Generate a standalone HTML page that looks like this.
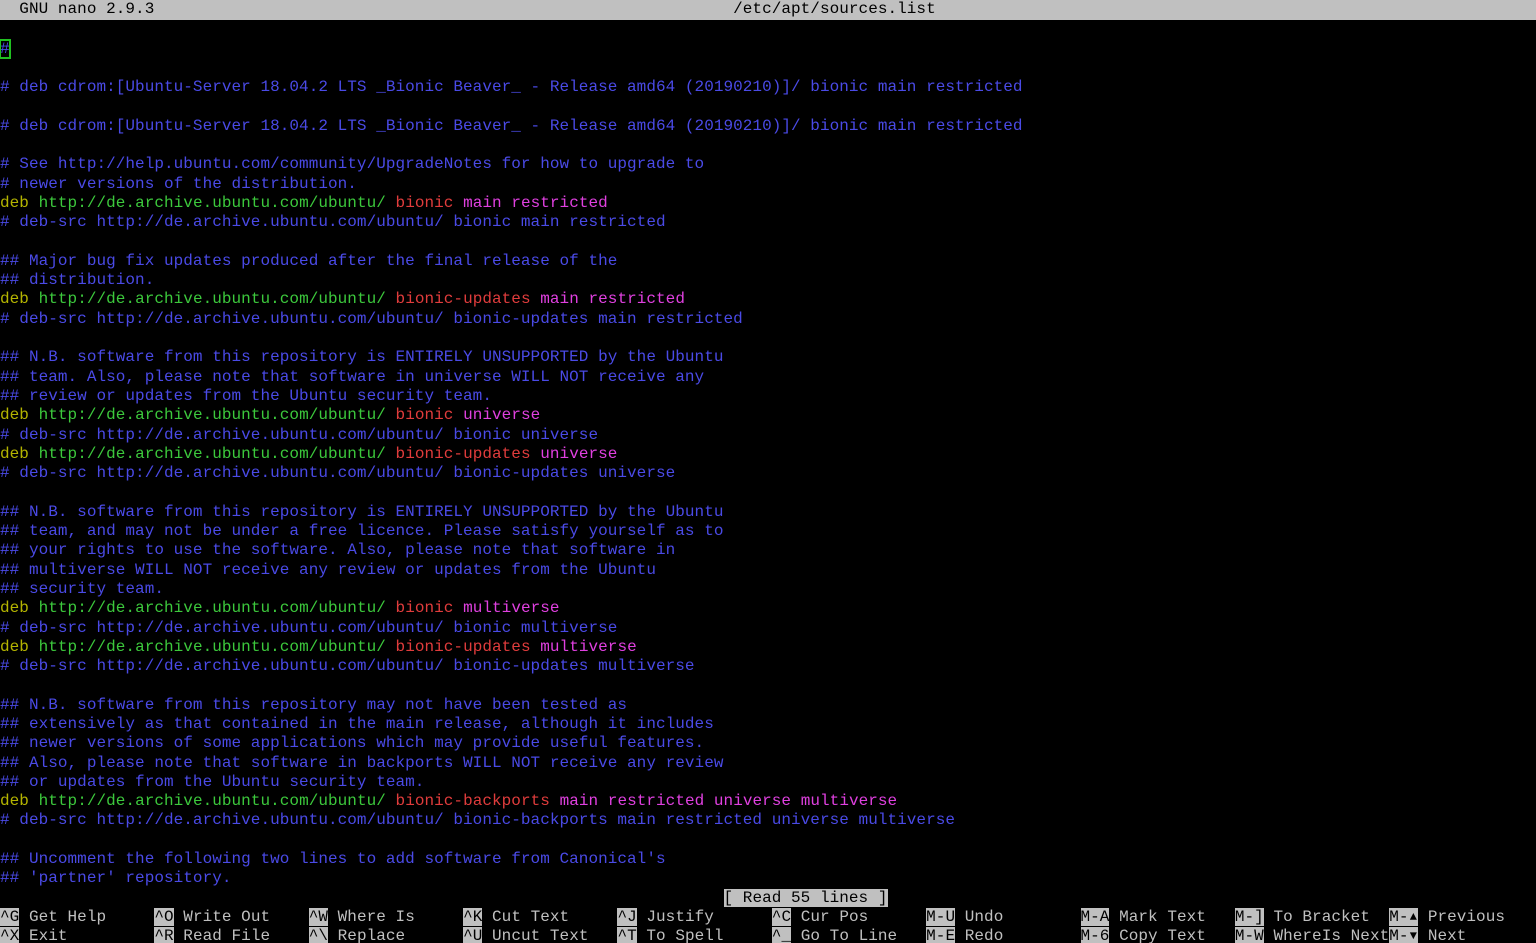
<!DOCTYPE html>
<html><head><meta charset="utf-8"><style>
html,body{margin:0;padding:0;background:#000;width:1536px;height:943px;overflow:hidden}
pre{margin:0;padding-top:1px;font-family:"Liberation Mono","Courier New",monospace;font-size:16px;letter-spacing:0.045px;line-height:19.3px;color:#c0c0c0;white-space:pre}
.row{height:19.3px;position:relative}
.title{background:#c0c0c0;color:#000;margin-top:-1px;height:20.3px}
.c{color:#4a4ae6}
.y{color:#b4b400}
.g{color:#3cc83c}
.r{color:#e03c3c}
.m{color:#e040e0}
.k{background:#c0c0c0;color:#000}
.a{display:inline-block;width:9.65px;overflow:hidden;vertical-align:top;font-size:12px;text-align:center}
.cur{outline:2px solid #20c020;outline-offset:-1px;color:#4a4ae6}
</style></head><body><pre><div class="row title">  GNU nano 2.9.3                                                            /etc/apt/sources.list</div><div class="row"></div><div class="row"><span class="cur">#</span></div><div class="row"></div><div class="row c"># deb cdrom:[Ubuntu-Server 18.04.2 LTS _Bionic Beaver_ - Release amd64 (20190210)]/ bionic main restricted</div><div class="row"></div><div class="row c"># deb cdrom:[Ubuntu-Server 18.04.2 LTS _Bionic Beaver_ - Release amd64 (20190210)]/ bionic main restricted</div><div class="row"></div><div class="row c"># See http://help.ubuntu.com/community/UpgradeNotes for how to upgrade to</div><div class="row c"># newer versions of the distribution.</div><div class="row"><span class="y">deb</span> <span class="g">http://de.archive.ubuntu.com/ubuntu/</span> <span class="r">bionic</span> <span class="m">main restricted</span></div><div class="row c"># deb-src http://de.archive.ubuntu.com/ubuntu/ bionic main restricted</div><div class="row"></div><div class="row c">## Major bug fix updates produced after the final release of the</div><div class="row c">## distribution.</div><div class="row"><span class="y">deb</span> <span class="g">http://de.archive.ubuntu.com/ubuntu/</span> <span class="r">bionic-updates</span> <span class="m">main restricted</span></div><div class="row c"># deb-src http://de.archive.ubuntu.com/ubuntu/ bionic-updates main restricted</div><div class="row"></div><div class="row c">## N.B. software from this repository is ENTIRELY UNSUPPORTED by the Ubuntu</div><div class="row c">## team. Also, please note that software in universe WILL NOT receive any</div><div class="row c">## review or updates from the Ubuntu security team.</div><div class="row"><span class="y">deb</span> <span class="g">http://de.archive.ubuntu.com/ubuntu/</span> <span class="r">bionic</span> <span class="m">universe</span></div><div class="row c"># deb-src http://de.archive.ubuntu.com/ubuntu/ bionic universe</div><div class="row"><span class="y">deb</span> <span class="g">http://de.archive.ubuntu.com/ubuntu/</span> <span class="r">bionic-updates</span> <span class="m">universe</span></div><div class="row c"># deb-src http://de.archive.ubuntu.com/ubuntu/ bionic-updates universe</div><div class="row"></div><div class="row c">## N.B. software from this repository is ENTIRELY UNSUPPORTED by the Ubuntu</div><div class="row c">## team, and may not be under a free licence. Please satisfy yourself as to</div><div class="row c">## your rights to use the software. Also, please note that software in</div><div class="row c">## multiverse WILL NOT receive any review or updates from the Ubuntu</div><div class="row c">## security team.</div><div class="row"><span class="y">deb</span> <span class="g">http://de.archive.ubuntu.com/ubuntu/</span> <span class="r">bionic</span> <span class="m">multiverse</span></div><div class="row c"># deb-src http://de.archive.ubuntu.com/ubuntu/ bionic multiverse</div><div class="row"><span class="y">deb</span> <span class="g">http://de.archive.ubuntu.com/ubuntu/</span> <span class="r">bionic-updates</span> <span class="m">multiverse</span></div><div class="row c"># deb-src http://de.archive.ubuntu.com/ubuntu/ bionic-updates multiverse</div><div class="row"></div><div class="row c">## N.B. software from this repository may not have been tested as</div><div class="row c">## extensively as that contained in the main release, although it includes</div><div class="row c">## newer versions of some applications which may provide useful features.</div><div class="row c">## Also, please note that software in backports WILL NOT receive any review</div><div class="row c">## or updates from the Ubuntu security team.</div><div class="row"><span class="y">deb</span> <span class="g">http://de.archive.ubuntu.com/ubuntu/</span> <span class="r">bionic-backports</span> <span class="m">main restricted universe multiverse</span></div><div class="row c"># deb-src http://de.archive.ubuntu.com/ubuntu/ bionic-backports main restricted universe multiverse</div><div class="row"></div><div class="row c">## Uncomment the following two lines to add software from Canonical's</div><div class="row c">## 'partner' repository.</div><div class="row">                                                                           <span class="k">[ Read 55 lines ]</span></div><div class="row"><span class="k">^G</span> Get Help     <span class="k">^O</span> Write Out    <span class="k">^W</span> Where Is     <span class="k">^K</span> Cut Text     <span class="k">^J</span> Justify      <span class="k">^C</span> Cur Pos      <span class="k">M-U</span> Undo        <span class="k">M-A</span> Mark Text   <span class="k">M-]</span> To Bracket  <span class="k">M-<span class="a">▲</span></span> Previous</div><div class="row"><span class="k">^X</span> Exit         <span class="k">^R</span> Read File    <span class="k">^\</span> Replace      <span class="k">^U</span> Uncut Text   <span class="k">^T</span> To Spell     <span class="k">^_</span> Go To Line   <span class="k">M-E</span> Redo        <span class="k">M-6</span> Copy Text   <span class="k">M-W</span> WhereIs Next<span class="k">M-<span class="a">▼</span></span> Next</div></pre></body></html>
